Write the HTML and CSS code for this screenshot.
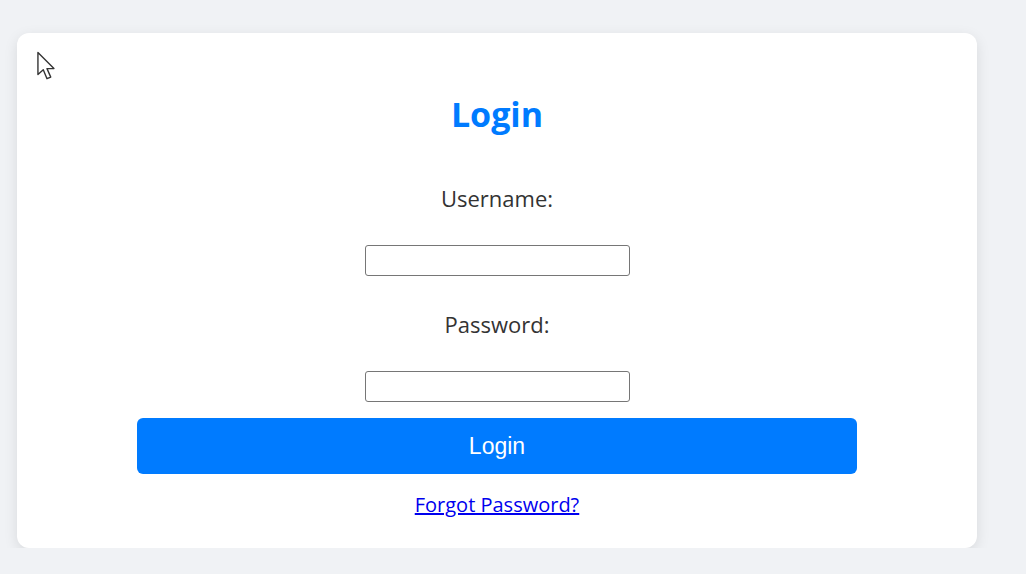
FILE: index.html
```html
<!DOCTYPE html>
<html lang="en">
<head>
    <meta charset="UTF-8">
    <meta name="viewport" content="width=device-width, initial-scale=1.0">
    <title>Login</title>
    <link rel="stylesheet" href="styles.css">
</head>
<body>
    <div class="card">
        <svg class="cursor" width="22" height="32" viewBox="0 0 20 30">
            <path d="M1.5 1.5 L1.5 22 L6.5 17.5 L10 26 L13.5 24.5 L10 16.5 L16.5 16.5 Z" fill="#fff" stroke="#333" stroke-width="1.3" stroke-linejoin="round"/>
        </svg>
        <h1>Login</h1>
        <form class="login-form" onsubmit="return false">
            <label for="username">Username:</label>
            <input type="text" id="username">
            <label for="password">Password:</label>
            <input type="password" id="password">
            <button type="submit">Login</button>
        </form>
        <a href="#" class="forgot">Forgot Password?</a>
    </div>
</body>
</html>
```

FILE: styles.css
```css
body { margin: 0; padding: 33px 0 0 17px; background: #f0f2f5; font-family: "Open Sans", "Noto Sans", sans-serif; }
.card { position: relative; width: 960px; height: 515px; box-sizing: border-box; background: #fff; border-radius: 12px; box-shadow: 0 4px 14px rgba(0, 0, 0, 0.1); display: flex; flex-direction: column; align-items: center; padding-top: 61px; }
.cursor { position: absolute; left: 19px; top: 18px; }
h1 { margin: 0; color: #007bff; font-size: 34px; line-height: 40px; font-weight: 700; }
.login-form { display: flex; flex-direction: column; align-items: center; width: 720px; margin-top: 51px; }
label { font-size: 22px; line-height: 26px; color: #333; margin-bottom: 34px; }
input { width: 265px; height: 31px; box-sizing: border-box; border: 1px solid #767676; border-radius: 3px; margin-bottom: 35px; }
#password { margin-bottom: 16px; }
button { width: 720px; height: 56px; border: none; border-radius: 6px; background: #007bff; color: #fff; font-family: "Liberation Sans", Arial, sans-serif; font-size: 23px; cursor: pointer; }
.forgot { margin-top: 18px; font-size: 20px; line-height: 26px; color: #0000ee; }
```
